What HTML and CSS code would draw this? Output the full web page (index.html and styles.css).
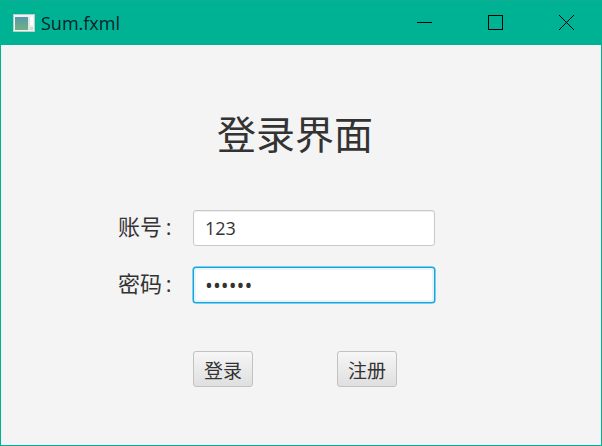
FILE: index.html
```html
<html>

<head>
    <meta charset="utf-8">
    <title>Sum.fxml</title>
    <link rel="stylesheet" href="styles.css">
</head>

<body>
    <div class="window">
        <div class="titlebar">
            <svg class="app-icon" width="22" height="18" viewBox="0 0 22 18">
                <defs>
                    <linearGradient id="pane" x1="0" y1="0" x2="0" y2="1">
                        <stop offset="0" stop-color="#5a97ad"/>
                        <stop offset="1" stop-color="#6fb27f"/>
                    </linearGradient>
                </defs>
                <rect x="0.5" y="0.5" width="21" height="17" fill="#eef2f2" stroke="#b9cfca"/>
                <rect x="2" y="3" width="13" height="13" fill="url(#pane)"/>
                <rect x="15" y="3" width="2" height="13" fill="#dfe8e6"/>
                <rect x="17" y="3" width="3" height="8" fill="#fff"/>
                <rect x="17" y="13" width="3" height="3" fill="#cfdcd8"/>
            </svg>
            <div class="window-title">Sum.fxml</div>
            <div class="controls">
                <svg class="control" width="71" height="45" viewBox="0 0 71 45">
                    <path d="M28 22.5H43" stroke="#000" stroke-width="1"/>
                </svg>
                <svg class="control" width="71" height="45" viewBox="0 0 71 45">
                    <rect x="28.5" y="15.5" width="14" height="14" fill="none" stroke="#000" stroke-width="1"/>
                </svg>
                <svg class="control" width="71" height="45" viewBox="0 0 71 45">
                    <path d="M28 15L43 30M43 15L28 30" stroke="#000" stroke-width="1"/>
                </svg>
            </div>
        </div>
        <div class="content">
            <div class="heading">登录界面</div>
            <div class="form-row">
                <label class="field-label">账号 :</label>
                <input class="field" type="text" value="123">
            </div>
            <div class="form-row">
                <label class="field-label">密码 :</label>
                <input class="field focused" type="password" value="123456">
            </div>
            <div class="actions">
                <button class="btn">登录</button>
                <button class="btn">注册</button>
            </div>
        </div>
    </div>
</body>

</html>
```

FILE: styles.css
```css
html, body{
    margin: 0;
    padding: 0;
}

body{
    width: 602px;
    height: 446px;
    overflow: hidden;
    font-family: "Open Sans", "Noto Sans CJK SC", sans-serif;
    color: #333;
}

.window{
    box-sizing: border-box;
    width: 602px;
    height: 446px;
    display: flex;
    flex-direction: column;
    background: #f4f4f4;
    border: 1px solid #00b294;
    border-top: none;
}

.titlebar{
    display: flex;
    align-items: center;
    height: 45px;
    margin: 0 -1px;
    background: #00b294;
    border-top: 1px solid #12ab94;
    box-sizing: border-box;
}

.app-icon{
    margin-left: 13px;
    margin-right: 6px;
}

.window-title{
    font-size: 18px;
    color: #02232a;
    flex: 1;
}

.controls{
    display: flex;
    margin-top: -1px;
}

.control{
    display: block;
}

.content{
    flex: 1;
    display: flex;
    flex-direction: column;
}

.heading{
    margin-top: 61px;
    margin-left: 216px;
    width: 156px;
    text-align: center;
    font-size: 39px;
    line-height: 56px;
    color: #333;
}

.form-row{
    display: flex;
    align-items: center;
    height: 36px;
    margin-bottom: 21px;
    padding-left: 117px;
}

.heading + .form-row{
    margin-top: 48px;
}

.field-label{
    width: 75px;
    padding-bottom: 6px;
    font-size: 22px;
    word-spacing: -2px;
    white-space: nowrap;
    color: #333;
}

.field{
    box-sizing: border-box;
    width: 242px;
    height: 36px;
    padding: 0 11px;
    font-family: "Open Sans", sans-serif;
    font-size: 18px;
    color: #333;
    background: #fff;
    border: 1px solid #c8c8c8;
    border-radius: 3px;
    box-shadow: inset 0 1px 1px #eee;
    outline: none;
}

.field.focused{
    padding: 0 11px;
    font-size: 21px;
    border: 1px solid #0ea5e0;
    box-shadow: 0 0 0 0.5px #0ea5e0, inset 0 0 0 2px #e6f4fb;
}

.actions{
    display: flex;
    gap: 84px;
    margin-top: 27px;
    padding-left: 192px;
}

.btn{
    box-sizing: border-box;
    width: 60px;
    height: 36px;
    padding: 0;
    font-family: "Noto Sans CJK SC", sans-serif;
    font-size: 19px;
    color: #333;
    background: linear-gradient(#f6f6f6, #dfdfdf);
    border: 1px solid #c2c2c2;
    border-radius: 3px;
}
```
